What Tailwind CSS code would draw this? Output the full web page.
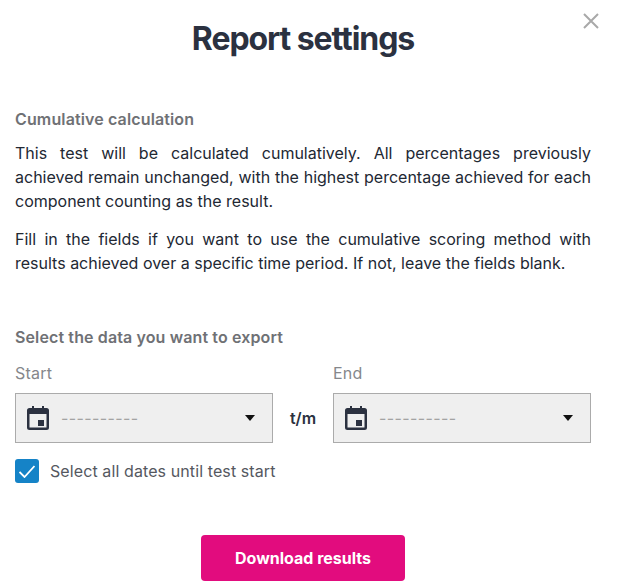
<!DOCTYPE html>
<html lang="en">
<head>
    <meta charset="UTF-8">
    <title>Report settings</title>
    <script src="https://cdn.jsdelivr.net/npm/@tailwindcss/browser@4"></script>
</head>
<body class="bg-white font-['Inter',sans-serif]">
    <div class="relative w-[621px] h-[587px] overflow-hidden pl-[15px] pr-[30px] pt-[19px]">
        <button class="absolute left-[583px] top-[13px] text-[#a9a9a9]">
            <svg width="16" height="16" viewBox="0 0 16 16" fill="none" stroke="currentColor" stroke-width="2"><path d="M1 1L15 15M15 1L1 15"/></svg>
        </button>

        <h1 class="text-center text-[32px] leading-[40px] font-bold tracking-[-1.08px] text-[#2b3140]">Report settings</h1>

        <h2 class="mt-[48px] text-base leading-[24px] font-semibold tracking-[0.13px] text-[#6f7175]">Cumulative calculation</h2>
        <p class="mt-[10px] text-base leading-[24px] text-justify text-[#222833]">This test will be calculated cumulatively. All percentages previously achieved remain unchanged, with the highest percentage achieved for each component counting as the result.</p>
        <p class="mt-[14px] text-base leading-[24px] text-justify text-[#222833]">Fill in the fields if you want to use the cumulative scoring method with results achieved over a specific time period. If not, leave the fields blank.</p>

        <h2 class="mt-[50px] text-base leading-[24px] font-semibold tracking-[0.12px] text-[#6f7175]">Select the data you want to export</h2>

        <div class="mt-[12px] flex items-end">
            <div class="w-[258px]">
                <label class="block text-base leading-[24px] tracking-[0.2px] text-[#85878b]">Start</label>
                <div class="mt-[8px] flex items-center h-[50px] border border-[#ababab] bg-[#efefef] pl-[11px] pr-[17px]">
                    <svg width="22" height="24" viewBox="0 0 22 24" fill="#2b3140"><path fill-rule="evenodd" d="M5 0h2v2h8V0h2v2h2.500A2.500 2.500 0 0 1 22 4.500v17a2.500 2.500 0 0 1-2.500 2.500h-17A2.500 2.500 0 0 1 0 21.500v-17A2.500 2.500 0 0 1 2.500 2H5zM2.500 8v13.500h17V8z"/><path d="M11 14h6v6h-6z"/></svg>
                    <span class="ml-[12px] text-base text-[#a3a3a3] tracking-[0.4px]">----------</span>
                    <svg class="ml-auto" width="10" height="6" viewBox="0 0 10 6" fill="#111"><path d="M0 0h10L5 6z"/></svg>
                </div>
            </div>
            <div class="w-[60px] h-[50px] flex items-center justify-center text-base font-semibold text-[#2b3140]">t/m</div>
            <div class="w-[258px]">
                <label class="block text-base leading-[24px] tracking-[0.2px] text-[#85878b]">End</label>
                <div class="mt-[8px] flex items-center h-[50px] border border-[#ababab] bg-[#efefef] pl-[11px] pr-[17px]">
                    <svg width="22" height="24" viewBox="0 0 22 24" fill="#2b3140"><path fill-rule="evenodd" d="M5 0h2v2h8V0h2v2h2.500A2.500 2.500 0 0 1 22 4.500v17a2.500 2.500 0 0 1-2.500 2.500h-17A2.500 2.500 0 0 1 0 21.500v-17A2.500 2.500 0 0 1 2.500 2H5zM2.500 8v13.500h17V8z"/><path d="M11 14h6v6h-6z"/></svg>
                    <span class="ml-[12px] text-base text-[#a3a3a3] tracking-[0.4px]">----------</span>
                    <svg class="ml-auto" width="10" height="6" viewBox="0 0 10 6" fill="#111"><path d="M0 0h10L5 6z"/></svg>
                </div>
            </div>
        </div>

        <div class="mt-[16px] flex items-center">
            <div class="w-[24px] h-[24px] rounded-[3px] bg-[#1583c7] flex items-center justify-center">
                <svg width="16" height="13" viewBox="0 0 16 13" fill="none" stroke="#fff" stroke-width="1.800"><path d="M0.500 7l5 5 10-11"/></svg>
            </div>
            <span class="ml-[11px] text-base leading-[24px] tracking-[0.1px] text-[#55585f]">Select all dates until test start</span>
        </div>

        <div class="mt-[52px] flex justify-center">
            <button class="w-[204px] h-[46px] rounded-[4px] bg-[#e20c7e] text-white text-base font-bold">Download results</button>
        </div>
    </div>
</body>
</html>
